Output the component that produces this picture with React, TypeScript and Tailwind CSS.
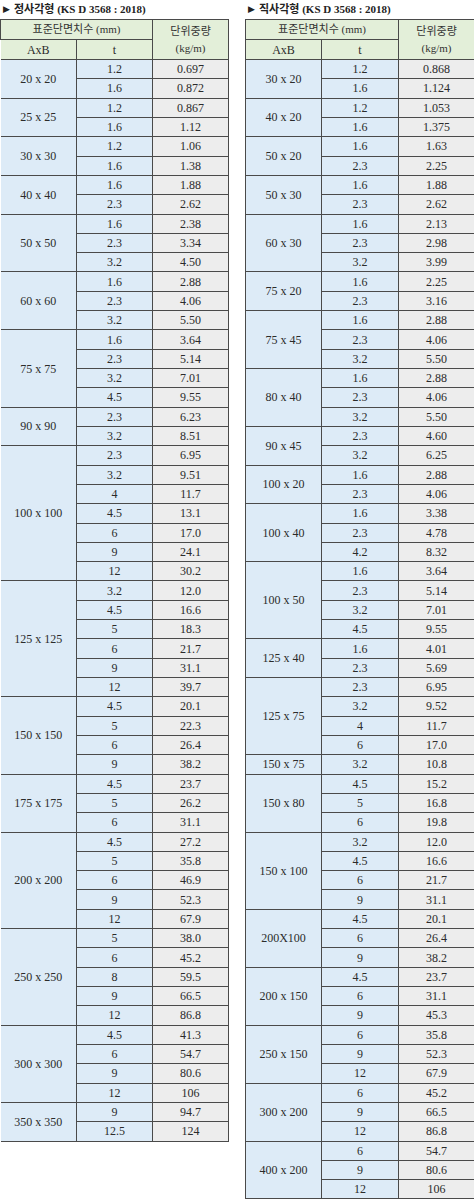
type Row = { t: string; w: string; dark?: boolean };
type Group = { size: string; rows: Row[] };

const g = (size: string, rows: [string, string, boolean?][]): Group => ({
  size,
  rows: rows.map(([t, w, dark]) => ({ t, w, dark })),
});

const squares: Group[] = [
  g("20 x 20", [["1.2", "0.697"], ["1.6", "0.872"]]),
  g("25 x 25", [["1.2", "0.867"], ["1.6", "1.12"]]),
  g("30 x 30", [["1.2", "1.06"], ["1.6", "1.38"]]),
  g("40 x 40", [["1.6", "1.88"], ["2.3", "2.62"]]),
  g("50 x 50", [["1.6", "2.38"], ["2.3", "3.34"], ["3.2", "4.50"]]),
  g("60 x 60", [["1.6", "2.88"], ["2.3", "4.06"], ["3.2", "5.50"]]),
  g("75 x 75", [["1.6", "3.64"], ["2.3", "5.14", true], ["3.2", "7.01"], ["4.5", "9.55"]]),
  g("90 x 90", [["2.3", "6.23"], ["3.2", "8.51"]]),
  g("100 x 100", [["2.3", "6.95"], ["3.2", "9.51"], ["4", "11.7"], ["4.5", "13.1"], ["6", "17.0"], ["9", "24.1"], ["12", "30.2"]]),
  g("125 x 125", [["3.2", "12.0"], ["4.5", "16.6"], ["5", "18.3"], ["6", "21.7"], ["9", "31.1"], ["12", "39.7"]]),
  g("150 x 150", [["4.5", "20.1"], ["5", "22.3"], ["6", "26.4"], ["9", "38.2"]]),
  g("175 x 175", [["4.5", "23.7"], ["5", "26.2"], ["6", "31.1"]]),
  g("200 x 200", [["4.5", "27.2"], ["5", "35.8", true], ["6", "46.9"], ["9", "52.3"], ["12", "67.9"]]),
  g("250 x 250", [["5", "38.0"], ["6", "45.2", true], ["8", "59.5"], ["9", "66.5"], ["12", "86.8"]]),
  g("300 x 300", [["4.5", "41.3"], ["6", "54.7"], ["9", "80.6"], ["12", "106"]]),
  g("350 x 350", [["9", "94.7"], ["12.5", "124"]]),
];

const rects: Group[] = [
  g("30 x 20", [["1.2", "0.868"], ["1.6", "1.124"]]),
  g("40 x 20", [["1.2", "1.053"], ["1.6", "1.375"]]),
  g("50 x 20", [["1.6", "1.63"], ["2.3", "2.25"]]),
  g("50 x 30", [["1.6", "1.88"], ["2.3", "2.62"]]),
  g("60 x 30", [["1.6", "2.13"], ["2.3", "2.98"], ["3.2", "3.99"]]),
  g("75 x 20", [["1.6", "2.25"], ["2.3", "3.16"]]),
  g("75 x 45", [["1.6", "2.88"], ["2.3", "4.06"], ["3.2", "5.50", true]]),
  g("80 x 40", [["1.6", "2.88"], ["2.3", "4.06"], ["3.2", "5.50"]]),
  g("90 x 45", [["2.3", "4.60"], ["3.2", "6.25"]]),
  g("100 x 20", [["1.6", "2.88"], ["2.3", "4.06"]]),
  g("100 x 40", [["1.6", "3.38"], ["2.3", "4.78"], ["4.2", "8.32"]]),
  g("100 x 50", [["1.6", "3.64"], ["2.3", "5.14"], ["3.2", "7.01"], ["4.5", "9.55"]]),
  g("125 x 40", [["1.6", "4.01"], ["2.3", "5.69"]]),
  g("125 x 75", [["2.3", "6.95"], ["3.2", "9.52"], ["4", "11.7"], ["6", "17.0"]]),
  g("150 x 75", [["3.2", "10.8"]]),
  g("150 x 80", [["4.5", "15.2"], ["5", "16.8"], ["6", "19.8"]]),
  g("150 x 100", [["3.2", "12.0"], ["4.5", "16.6"], ["6", "21.7"], ["9", "31.1"]]),
  g("200X100", [["4.5", "20.1"], ["6", "26.4"], ["9", "38.2"]]),
  g("200 x 150", [["4.5", "23.7"], ["6", "31.1"], ["9", "45.3"]]),
  g("250 x 150", [["6", "35.8"], ["9", "52.3"], ["12", "67.9"]]),
  g("300 x 200", [["6", "45.2"], ["9", "66.5"], ["12", "86.8"]]),
  g("400 x 200", [["6", "54.7"], ["9", "80.6"], ["12", "106"]]),
];

const font = { fontFamily: '"Liberation Serif", "Noto Sans CJK KR", serif' };

function SpecTable({
  title,
  groups,
  cols,
  edge,
}: {
  title: string;
  groups: Group[];
  cols: [number, number, number];
  edge?: boolean;
}) {
  const cell = "border border-[#4a4a4a] text-center align-middle p-0";
  return (
    <div className="flex flex-col">
      <div className="h-[19px] flex items-center pl-[3px] text-[11px] font-bold text-[#222] whitespace-nowrap">
        <span className="text-[9px] mr-[4px] mt-[1px]" style={{ fontFamily: '"DejaVu Sans", sans-serif' }}>
          ▶
        </span>
        {title}
      </div>
      <table
        className={`border-collapse table-fixed text-[12px] text-[#2b2b2b] border-[#2f2f2f] border-y-[1.5px] border-r-[1.5px] ${
          edge ? "border-l-0" : "border-l-[1.5px]"
        }`}
        style={{ width: cols[0] + cols[1] + cols[2] }}
      >
        <colgroup>
          <col style={{ width: cols[0] }} />
          <col style={{ width: cols[1] }} />
          <col style={{ width: cols[2] }} />
        </colgroup>
        <thead>
          <tr className="h-[20px] bg-[#e3efd9]">
            <th colSpan={2} className={`${cell} font-normal text-[11px] text-[#333]`}>
              표준단면치수 (mm)
            </th>
            <th rowSpan={2} className={`${cell} font-normal text-[11px] leading-[17px] text-[#333]`}>
              단위중량
              <br />
              (kg/m)
            </th>
          </tr>
          <tr className="h-[20px] bg-[#e3efd9]">
            <th className={`${cell} font-normal ${edge ? "border-l-0" : ""}`}>AxB</th>
            <th className={`${cell} font-normal`}>t</th>
          </tr>
        </thead>
        <tbody>
          {groups.map((grp) =>
            grp.rows.map((r, i) => (
              <tr key={grp.size + r.t + i} className="h-[19.32px]">
                {i === 0 && (
                  <td
                    rowSpan={grp.rows.length}
                    className={`${cell} bg-[#ddebf7] ${edge ? "border-l-0" : ""}`}
                  >
                    {grp.size}
                  </td>
                )}
                <td className={`${cell} bg-[#ddebf7] ${r.dark ? "border-t-[#111] border-t-[1.5px]" : ""}`}>{r.t}</td>
                <td className={`${cell} bg-[#ededed] ${r.dark ? "border-t-[#111] border-t-[1.5px]" : ""}`}>{r.w}</td>
              </tr>
            ))
          )}
        </tbody>
      </table>
    </div>
  );
}

export default function App() {
  return (
    <div className="w-[474px] h-[1200px] bg-white flex gap-[16px] overflow-hidden" style={font}>
      <SpecTable title="정사각형 (KS D 3568 : 2018)" groups={squares} cols={[76, 76, 76]} edge />
      <SpecTable title="직사각형 (KS D 3568 : 2018)" groups={rects} cols={[76, 77, 76]} />
    </div>
  );
}
